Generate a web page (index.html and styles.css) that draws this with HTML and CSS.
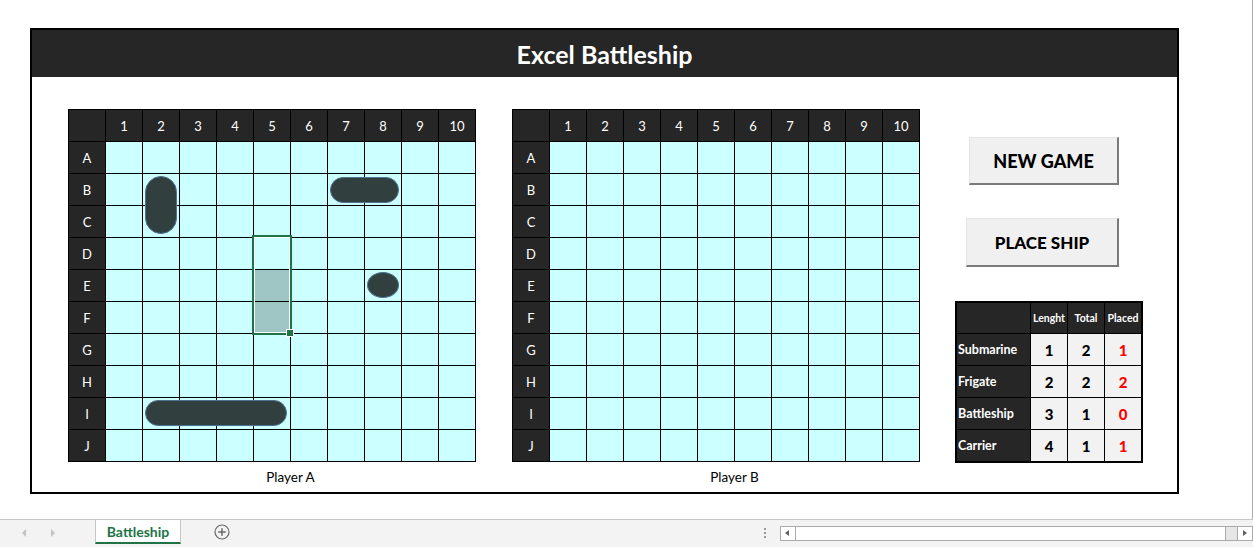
FILE: index.html
```html
<!DOCTYPE html>
<html>
<head>
<meta charset="utf-8">
<link rel="stylesheet" href="styles.css">
</head>
<body>
<div class="sheet">
  <div class="frame">
    <div class="title">Excel Battleship</div>
    <div class="content">
      <div class="board-wrap">
        <div class="board">
          <div class="hd"></div><div class="hd">1</div><div class="hd">2</div><div class="hd">3</div><div class="hd">4</div><div class="hd">5</div><div class="hd">6</div><div class="hd">7</div><div class="hd">8</div><div class="hd">9</div><div class="hd">10</div>
          <div class="hd">A</div><div class="c"></div><div class="c"></div><div class="c"></div><div class="c"></div><div class="c"></div><div class="c"></div><div class="c"></div><div class="c"></div><div class="c"></div><div class="c"></div>
          <div class="hd">B</div><div class="c"></div><div class="c"></div><div class="c"></div><div class="c"></div><div class="c"></div><div class="c"></div><div class="c"></div><div class="c"></div><div class="c"></div><div class="c"></div>
          <div class="hd">C</div><div class="c"></div><div class="c"></div><div class="c"></div><div class="c"></div><div class="c"></div><div class="c"></div><div class="c"></div><div class="c"></div><div class="c"></div><div class="c"></div>
          <div class="hd">D</div><div class="c"></div><div class="c"></div><div class="c"></div><div class="c"></div><div class="c"></div><div class="c"></div><div class="c"></div><div class="c"></div><div class="c"></div><div class="c"></div>
          <div class="hd">E</div><div class="c"></div><div class="c"></div><div class="c"></div><div class="c"></div><div class="c sel"></div><div class="c"></div><div class="c"></div><div class="c"></div><div class="c"></div><div class="c"></div>
          <div class="hd">F</div><div class="c"></div><div class="c"></div><div class="c"></div><div class="c"></div><div class="c sel"></div><div class="c"></div><div class="c"></div><div class="c"></div><div class="c"></div><div class="c"></div>
          <div class="hd">G</div><div class="c"></div><div class="c"></div><div class="c"></div><div class="c"></div><div class="c"></div><div class="c"></div><div class="c"></div><div class="c"></div><div class="c"></div><div class="c"></div>
          <div class="hd">H</div><div class="c"></div><div class="c"></div><div class="c"></div><div class="c"></div><div class="c"></div><div class="c"></div><div class="c"></div><div class="c"></div><div class="c"></div><div class="c"></div>
          <div class="hd">I</div><div class="c"></div><div class="c"></div><div class="c"></div><div class="c"></div><div class="c"></div><div class="c"></div><div class="c"></div><div class="c"></div><div class="c"></div><div class="c"></div>
          <div class="hd">J</div><div class="c"></div><div class="c"></div><div class="c"></div><div class="c"></div><div class="c"></div><div class="c"></div><div class="c"></div><div class="c"></div><div class="c"></div><div class="c"></div>
          <div class="ship ship1"></div>
          <div class="ship ship2"></div>
          <div class="ship ship3"></div>
          <div class="ship ship4"></div>
          <div class="selection"><div class="handle"></div></div>
        </div>
        <div class="label">Player A</div>
      </div>
      <div class="board-wrap board-b">
        <div class="board">
          <div class="hd"></div><div class="hd">1</div><div class="hd">2</div><div class="hd">3</div><div class="hd">4</div><div class="hd">5</div><div class="hd">6</div><div class="hd">7</div><div class="hd">8</div><div class="hd">9</div><div class="hd">10</div>
          <div class="hd">A</div><div class="c"></div><div class="c"></div><div class="c"></div><div class="c"></div><div class="c"></div><div class="c"></div><div class="c"></div><div class="c"></div><div class="c"></div><div class="c"></div>
          <div class="hd">B</div><div class="c"></div><div class="c"></div><div class="c"></div><div class="c"></div><div class="c"></div><div class="c"></div><div class="c"></div><div class="c"></div><div class="c"></div><div class="c"></div>
          <div class="hd">C</div><div class="c"></div><div class="c"></div><div class="c"></div><div class="c"></div><div class="c"></div><div class="c"></div><div class="c"></div><div class="c"></div><div class="c"></div><div class="c"></div>
          <div class="hd">D</div><div class="c"></div><div class="c"></div><div class="c"></div><div class="c"></div><div class="c"></div><div class="c"></div><div class="c"></div><div class="c"></div><div class="c"></div><div class="c"></div>
          <div class="hd">E</div><div class="c"></div><div class="c"></div><div class="c"></div><div class="c"></div><div class="c"></div><div class="c"></div><div class="c"></div><div class="c"></div><div class="c"></div><div class="c"></div>
          <div class="hd">F</div><div class="c"></div><div class="c"></div><div class="c"></div><div class="c"></div><div class="c"></div><div class="c"></div><div class="c"></div><div class="c"></div><div class="c"></div><div class="c"></div>
          <div class="hd">G</div><div class="c"></div><div class="c"></div><div class="c"></div><div class="c"></div><div class="c"></div><div class="c"></div><div class="c"></div><div class="c"></div><div class="c"></div><div class="c"></div>
          <div class="hd">H</div><div class="c"></div><div class="c"></div><div class="c"></div><div class="c"></div><div class="c"></div><div class="c"></div><div class="c"></div><div class="c"></div><div class="c"></div><div class="c"></div>
          <div class="hd">I</div><div class="c"></div><div class="c"></div><div class="c"></div><div class="c"></div><div class="c"></div><div class="c"></div><div class="c"></div><div class="c"></div><div class="c"></div><div class="c"></div>
          <div class="hd">J</div><div class="c"></div><div class="c"></div><div class="c"></div><div class="c"></div><div class="c"></div><div class="c"></div><div class="c"></div><div class="c"></div><div class="c"></div><div class="c"></div>
        </div>
        <div class="label">Player B</div>
      </div>
      <div class="panel">
        <div class="btn btn-new">NEW GAME</div>
        <div class="btn btn-place">PLACE SHIP</div>
        <div class="stats">
          <div class="th"></div><div class="th">Lenght</div><div class="th">Total</div><div class="th">Placed</div>
          <div class="rl">Submarine</div><div class="v">1</div><div class="v">2</div><div class="v red">1</div>
          <div class="rl">Frigate</div><div class="v">2</div><div class="v">2</div><div class="v red">2</div>
          <div class="rl">Battleship</div><div class="v">3</div><div class="v">1</div><div class="v red">0</div>
          <div class="rl">Carrier</div><div class="v">4</div><div class="v">1</div><div class="v red">1</div>
        </div>
      </div>
    </div>
  </div>
</div>
<div class="tabs">
  <div class="nav">
    <span class="tri tri-l"></span>
    <span class="tri tri-r"></span>
  </div>
  <div class="tab">Battleship</div>
  <div class="plus">
    <svg width="16" height="16" viewBox="0 0 16 16"><circle cx="8" cy="8" r="7" fill="none" stroke="#6a6a6a" stroke-width="1.2"/><path d="M8 4.2V11.8M4.2 8H11.8" stroke="#6a6a6a" stroke-width="1.5"/></svg>
  </div>
  <div class="right-group">
    <div class="dots"><i></i><i></i><i></i></div>
    <div class="scrollbar">
      <div class="sb-btn"><span class="sb-tri sb-l"></span></div>
      <div class="thumb"></div>
      <div class="track"></div>
      <div class="sb-btn sb-btn-r"><span class="sb-tri sb-r"></span></div>
    </div>
  </div>
</div>
</body>
</html>
```

FILE: styles.css
```css
html, body {
  margin: 0;
  padding: 0;
  background: #fff;
}
body {
  width: 1253px;
  height: 547px;
  overflow: hidden;
  font-family: Lato, "Liberation Sans", sans-serif;
}
.sheet {
  width: 1253px;
  height: 519px;
  box-sizing: border-box;
  padding: 28px 0 0 30px;
  border-right: 1px solid #ababab;
  background: #fff;
}
.frame {
  width: 1149px;
  height: 466px;
  box-sizing: border-box;
  border: 2px solid #000;
}
.title {
  height: 47px;
  background: #262626;
  color: #fff;
  font-weight: 700;
  font-size: 25px;
  display: flex;
  align-items: center;
  justify-content: center;
}
.content {
  display: flex;
  padding: 32px 0 0 36px;
}
.board-wrap {
  display: flex;
  flex-direction: column;
}
.board-b {
  margin-left: 36px;
}
.board {
  position: relative;
  display: grid;
  grid-template-columns: repeat(11, 36px);
  grid-auto-rows: 31px;
  gap: 1px;
  padding: 1px;
  background: #000;
}
.hd {
  background: #262626;
  color: #fff;
  font-size: 13px;
  display: flex;
  align-items: center;
  justify-content: center;
}
.c {
  background: #ccffff;
}
.c.sel {
  background: #a0c5c5;
}
.label {
  padding-left: 37px;
  text-align: center;
  font-size: 13.5px;
  margin-top: 7px;
  color: #000;
}
.ship {
  position: absolute;
  background: #323f3f;
  border: 1px solid #4d7393;
  box-sizing: border-box;
  border-radius: 16px;
}
.ship1 { left: 77px; top: 67px; width: 32px; height: 58px; }
.ship2 { left: 262px; top: 68px; width: 69px; height: 26px; border-radius: 13px; }
.ship3 { left: 299px; top: 163px; width: 32px; height: 26px; border-radius: 50%; }
.ship4 { left: 77px; top: 291px; width: 142px; height: 26px; border-radius: 13px; }
.selection {
  position: absolute;
  left: 184px;
  top: 126px;
  width: 40px;
  height: 100px;
  box-sizing: border-box;
  border: 2px solid #217346;
  box-shadow: inset 0 0 0 1px #fff;
}
.handle {
  position: absolute;
  right: -4px;
  bottom: -4px;
  width: 6px;
  height: 6px;
  background: #217346;
  border: 1px solid #fff;
}
.panel {
  display: flex;
  flex-direction: column;
  align-items: flex-start;
  margin-top: 28px;
}
.btn {
  box-sizing: border-box;
  background: #f0f0f0;
  border-top: 1px solid #e4e4e4;
  border-left: 1px solid #e4e4e4;
  border-right: 2px solid #7a7a7a;
  border-bottom: 2px solid #7a7a7a;
  font-weight: 900;
  font-size: 18px;
  color: #000;
  display: flex;
  align-items: center;
  justify-content: center;
}
.btn-new {
  margin-left: 49px;
  width: 150px;
  height: 48px;
}
.btn-place {
  margin-left: 46px;
  margin-top: 33px;
  width: 153px;
  height: 49px;
  font-size: 17px;
}
.stats {
  margin-left: 35px;
  margin-top: 34px;
  display: grid;
  grid-template-columns: 73px 36px 36px 36px;
  grid-template-rows: 30px 31px 31px 31px 31px;
  gap: 1px;
  padding: 2px;
  background: #000;
}
.th {
  background: #262626;
  color: #fff;
  font-weight: 700;
  font-size: 10.5px;
  display: flex;
  align-items: center;
  justify-content: center;
}
.rl {
  background: #262626;
  color: #fff;
  font-weight: 700;
  font-size: 12.5px;
  display: flex;
  align-items: center;
  padding-left: 1px;
}
.v {
  background: #f2f2f2;
  color: #000;
  font-weight: 900;
  font-size: 15px;
  display: flex;
  align-items: center;
  justify-content: center;
}
.v.red {
  color: #ff0000;
}
.tabs {
  height: 28px;
  box-sizing: border-box;
  border-top: 1px solid #c6c6c6;
  background: #f3f3f3;
  display: flex;
  align-items: flex-start;
}
.nav {
  width: 95px;
  height: 27px;
  position: relative;
}
.tri {
  position: absolute;
  top: 9px;
  width: 0;
  height: 0;
  border-top: 4px solid transparent;
  border-bottom: 4px solid transparent;
}
.tri-l { left: 22px; border-right: 4px solid #c3c3c3; }
.tri-r { left: 51px; border-left: 4px solid #c3c3c3; }
.tab {
  width: 86px;
  height: 24px;
  box-sizing: border-box;
  background: #fff;
  border-left: 1px solid #c6c6c6;
  border-right: 1px solid #c6c6c6;
  border-bottom: 2px solid #217346;
  color: #217346;
  font-weight: 700;
  font-size: 14px;
  display: flex;
  align-items: center;
  justify-content: center;
  padding-top: 1px;
}
.plus {
  margin-left: 33px;
  margin-top: 4px;
  width: 16px;
  height: 16px;
}
.plus svg { display: block; }
.right-group {
  margin-left: auto;
  display: flex;
  align-items: flex-start;
}
.dots {
  width: 2px;
  margin-top: 8px;
  margin-right: 14px;
  display: flex;
  flex-direction: column;
  gap: 2px;
}
.dots i {
  display: block;
  width: 2px;
  height: 2px;
  background: #9a9a9a;
}
.scrollbar {
  margin-top: 6px;
  width: 473px;
  height: 15px;
  box-sizing: border-box;
  border: 1px solid #ababab;
  display: flex;
  background: #fff;
}
.sb-btn {
  width: 14px;
  position: relative;
  background: #fff;
}
.sb-btn-r {
  border-left: 1px solid #ababab;
}
.thumb {
  width: 429px;
  background: #fff;
  border-left: 1px solid #ababab;
  border-right: 1px solid #ababab;
}
.track {
  flex: 1;
  background: #e6e6e6;
}
.sb-tri {
  position: absolute;
  top: 3px;
  width: 0;
  height: 0;
  border-top: 3.5px solid transparent;
  border-bottom: 3.5px solid transparent;
}
.sb-l { left: 4px; border-right: 4px solid #606060; }
.sb-r { left: 5px; border-left: 4px solid #606060; }
```
